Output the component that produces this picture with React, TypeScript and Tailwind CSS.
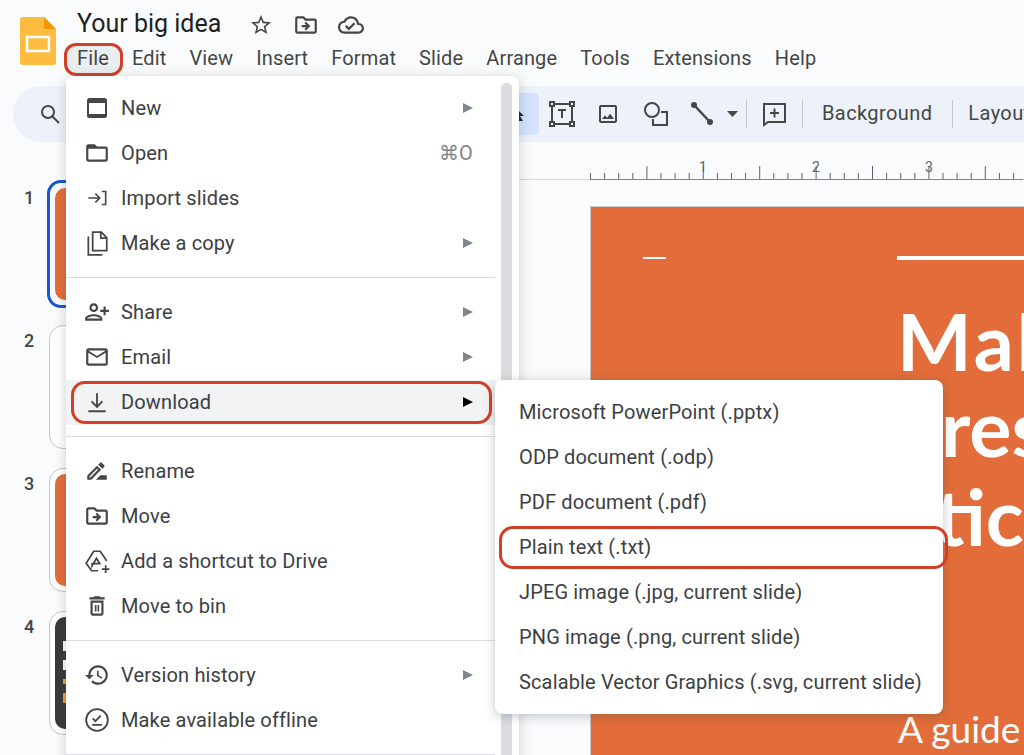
import React from 'react';

const paths = {
  folder: 'M20 6h-8l-2-2H4c-1.1 0-1.99.9-1.99 2L2 18c0 1.1.9 2 2 2h16c1.1 0 2-.9 2-2V8c0-1.1-.9-2-2-2zm0 12H4V8h16v10z',
  person: 'M15 12c2.21 0 4-1.79 4-4s-1.79-4-4-4-4 1.79-4 4 1.79 4 4 4zm0-6c1.1 0 2 .9 2 2s-.9 2-2 2-2-.9-2-2 .9-2 2-2zm0 8c-2.67 0-8 1.34-8 4v2h16v-2c0-2.66-5.33-4-8-4zm-6 4c.22-.72 3.31-2 6-2 2.7 0 5.8 1.29 6 2H9zm-3-3v-3h3v-2H6V7H4v3H1v2h3v3h2z',
  mail: 'M20 4H4c-1.1 0-1.99.9-1.99 2L2 18c0 1.1.9 2 2 2h16c1.1 0 2-.9 2-2V6c0-1.1-.9-2-2-2zm0 14H4V8l8 5 8-5v10zm-8-7L4 6h16l-8 5z',
  rename: 'M15 16l-4 4h10v-4zM12.06 7.19L3 16.25V20h3.75l9.06-9.06-3.75-3.75zM5.92 18H5v-.92l7.06-7.06.92.92L5.92 18zM18.71 8.04c.39-.39.39-1.02 0-1.41l-2.34-2.34c-.2-.2-.45-.29-.71-.29s-.51.1-.7.29l-1.83 1.83 3.75 3.75 1.83-1.83z',
  move: 'M20 6h-8l-2-2H4c-1.1 0-1.99.9-1.99 2L2 18c0 1.1.9 2 2 2h16c1.1 0 2-.9 2-2V8c0-1.1-.9-2-2-2zm0 12H4V6h5.17l2 2H20v10zm-8.01-9l-1.41 1.41L12.16 12H8v2h4.16l-1.59 1.59L11.99 17 16 13.01 11.99 9z',
  bin: 'M6 19c0 1.1.9 2 2 2h8c1.1 0 2-.9 2-2V7H6v12zM8 9h8v10H8V9zm7.5-5l-1-1h-5l-1 1H5v2h14V4zM10 11h1.5v6H10zM12.5 11H14v6h-1.5z',
  history: 'M13 3c-4.97 0-9 4.03-9 9H1l3.89 3.89.07.14L9 12H6c0-3.87 3.13-7 7-7s7 3.13 7 7-3.13 7-7 7c-1.93 0-3.68-.79-4.94-2.06l-1.42 1.42C8.27 19.99 10.51 21 13 21c4.97 0 9-4.03 9-9s-4.03-9-9-9zm-1 5v5l4.28 2.54.72-1.21-3.5-2.08V8H12z',
  star: 'M22 9.24l-7.19-.62L12 2 9.19 8.63 2 9.24l5.46 4.73L5.82 21 12 17.27 18.18 21l-1.63-7.03L22 9.24zM12 15.4l-3.76 2.27 1-4.28-3.32-2.88 4.38-.38L12 6.1l1.71 4.04 4.38.38-3.32 2.88 1 4.28L12 15.4z',
  cloud: 'M19.35 10.04C18.67 6.59 15.64 4 12 4 9.11 4 6.6 5.64 5.35 8.04 2.34 8.36 0 10.91 0 14c0 3.31 2.69 6 6 6h13c2.76 0 5-2.24 5-5 0-2.64-2.05-4.78-4.65-4.96zM19 18H6c-2.21 0-4-1.79-4-4 0-2.05 1.53-3.76 3.56-3.97l1.07-.11.5-.95C8.08 7.14 9.94 6 12 6c2.62 0 4.88 1.86 5.39 4.43l.3 1.5 1.53.11c1.56.1 2.78 1.41 2.78 2.96 0 1.65-1.35 3-3 3zm-9-3.82l-2.09-2.09L6.5 13.5 10 17l6.01-6.01-1.41-1.41z',
  image: 'M19 5v14H5V5h14m0-2H5c-1.1 0-2 .9-2 2v14c0 1.1.9 2 2 2h14c1.1 0 2-.9 2-2V5c0-1.1-.9-2-2-2zm-4.86 8.86l-3 3.87L9 13.14 6 17h12l-3.86-5.14z',
};

const Fill = ({ d, size = 26, flip = false }: { d: string; size?: number; flip?: boolean }) => (
  <svg width={size} height={size} viewBox="0 0 24 24" fill="#444746">
    <path d={d} transform={flip ? 'matrix(-1 0 0 1 24 0)' : undefined} />
  </svg>
);

const Stroke = ({ children, size = 26 }: { children: React.ReactNode; size?: number }) => (
  <svg width={size} height={size} viewBox="0 0 24 24" fill="none" stroke="#444746" strokeWidth="2">
    {children}
  </svg>
);

const NewIcon = () => (
  <svg width="26" height="26" viewBox="0 0 26 26">
    <rect x="3" y="3" width="20" height="20" rx="2.5" fill="#444746" />
    <rect x="5" y="8" width="16" height="11" fill="#fff" />
  </svg>
);
const ImportIcon = () => (
  <Stroke>
    <path d="M4 12h10M10.500 8l4 4-4 4M16.500 6H20v12h-3.500" strokeWidth="1.5" />
  </Stroke>
);
const CopyIcon = () => (
  <Stroke>
    <path d="M8 2h8l5 5v12H8zM15.500 2v5.500H21M4 6v17h13" strokeWidth="1.6" />
  </Stroke>
);
const DownloadIcon = () => (
  <Stroke>
    <path d="M12 4v12M7 11.500l5 5 5-5M4 20.500h16" strokeWidth="1.7" />
  </Stroke>
);
const DriveIcon = () => (
  <Stroke>
    <path d="M13 21H7L2 14 9 3h6l6 9M9 3l-2 3M7.500 16.500L11.500 9.500l3 5H7.500z" strokeWidth="1.6" />
    <path d="M20 16v7M16.500 19.500h7" strokeWidth="1.6" />
  </Stroke>
);
const OfflineIcon = () => (
  <Stroke>
    <circle cx="12" cy="12" r="10" strokeWidth="1.7" />
    <path d="M8 10.500l2.500 2.500 5-5M7.500 16.500h9" strokeWidth="1.7" />
  </Stroke>
);

const Arrow = ({ dark = false }: { dark?: boolean }) => (
  <svg width="10" height="10" viewBox="0 0 10 10">
    <path d="M0 0l10 5-10 5z" fill={dark ? '#000000' : '#80868b'} />
  </svg>
);

const fileGroups: { label: string; icon: React.ReactNode; arrow?: boolean; hint?: string; active?: boolean }[][] = [
  [
    { label: 'New', icon: <NewIcon />, arrow: true },
    { label: 'Open', icon: <Fill d={paths.folder} />, hint: '⌘O' },
    { label: 'Import slides', icon: <ImportIcon /> },
    { label: 'Make a copy', icon: <CopyIcon />, arrow: true },
  ],
  [
    { label: 'Share', icon: <Fill d={paths.person} flip />, arrow: true },
    { label: 'Email', icon: <Fill d={paths.mail} />, arrow: true },
    { label: 'Download', icon: <DownloadIcon />, arrow: true, active: true },
  ],
  [
    { label: 'Rename', icon: <Fill d={paths.rename} /> },
    { label: 'Move', icon: <Fill d={paths.move} /> },
    { label: 'Add a shortcut to Drive', icon: <DriveIcon /> },
    { label: 'Move to bin', icon: <Fill d={paths.bin} /> },
  ],
  [
    { label: 'Version history', icon: <Fill d={paths.history} />, arrow: true },
    { label: 'Make available offline', icon: <OfflineIcon /> },
  ],
];

const formats = [
  'Microsoft PowerPoint (.pptx)',
  'ODP document (.odp)',
  'PDF document (.pdf)',
  'Plain text (.txt)',
  'JPEG image (.jpg, current slide)',
  'PNG image (.png, current slide)',
  'Scalable Vector Graphics (.svg, current slide)',
];

const menuBar = ['File', 'Edit', 'View', 'Insert', 'Format', 'Slide', 'Arrange', 'Tools', 'Extensions', 'Help'];

const Ruler = () => {
  const ticks = [];
  for (let i = 0; i < 31; i++) {
    const x = i * 14.1;
    const big = i % 4 === 0 && i > 0;
    ticks.push(<path key={i} d={`M${x + 0.5} ${big ? 0 : 7}V13`} stroke="#5f6368" strokeWidth="1" />);
  }
  return (
    <svg width="433" height="14" viewBox="0 0 433 14">
      {ticks}
      <path d="M0 13.500H433" stroke="#80868b" strokeWidth="1" />
    </svg>
  );
};

const Thumb = ({ n, selected, children, className }: { n: number; selected?: boolean; children?: React.ReactNode; className?: string }) => (
  <div className="flex h-[124px] mb-[19px]">
    <div className="w-[48px] pl-[24px] pt-[6px] text-[18px] leading-[20px] font-medium text-[#444746]">{n}</div>
    <div
      className={
        selected
          ? 'w-[200px] h-[128px] -mt-[2px] rounded-[14px] border-[3px] border-[#1a56cf] p-[5px] -mb-[4px]'
          : 'w-[200px] ml-[2px] rounded-[14px] border border-[#c4c7c5] p-[5px] bg-white'
      }
    >
      <div className={`h-full rounded-[10px] ${className ?? ''}`}>{children}</div>
    </div>
  </div>
);

export default function App() {
  return (
    <div className="relative w-[1024px] h-[755px] overflow-hidden bg-[#f9fbfd] font-['Roboto',sans-serif] text-[#3c4043]">
      {/* Header */}
      <div className="flex h-[86px] pl-[20px] pt-[9px]">
        <svg width="36" height="48" viewBox="0 0 36 48" className="mt-[8px]">
          <path d="M3 0h21l12 12v33a3 3 0 0 1-3 3H3a3 3 0 0 1-3-3V3a3 3 0 0 1 3-3z" fill="#fbbc3f" />
          <path d="M24 0l12 12H24z" fill="#f29900" />
          <rect x="7" y="20" width="22" height="14" fill="none" stroke="#fff" strokeWidth="2.5" />
        </svg>
        <div className="ml-[21px]">
          <div className="flex items-center h-[30px]">
            <span className="text-[25px] leading-[30px] text-[#1f1f1f] w-[172px]">Your big idea</span>
            <span className="mt-[2px] flex"><Fill d={paths.star} size={24} /></span>
            <span className="ml-[20px] mt-[2px] flex"><Fill d={paths.move} size={26} /></span>
            <span className="ml-[19px] mt-[2px] flex"><Fill d={paths.cloud} size={26} /></span>
          </div>
          <div className="relative flex gap-[23px] mt-[6px] text-[20px] tracking-[0.14px] leading-[26px] text-[#444746]">
            {menuBar.map((m) => (
              <span key={m}>{m}</span>
            ))}
            <div className="absolute -left-[13px] -top-[2px] w-[59px] h-[33px] rounded-[12px] border-[3px] border-[#d23f26] bg-[#3c404312]" />
          </div>
        </div>
      </div>

      {/* Toolbar */}
      <div className="flex items-center h-[56px] ml-[13px] rounded-l-[28px] bg-[#edf2fa] text-[#444746] overflow-hidden [&>*]:shrink-0">
        <span className="ml-[25px] flex"><svg width="24" height="24" viewBox="0 0 24 24" fill="none" stroke="#444746" strokeWidth="2"><circle cx="10" cy="10" r="6" /><path d="M14.500 14.500L21 21" /></svg></span>
        <div className="ml-[457px] w-[20px] h-[42px] rounded-r-[5px] bg-[#d3e3fd] flex items-center justify-end pr-[14px]">
          <svg width="10" height="14" viewBox="0 0 10 14" className="shrink-0"><path d="M0 0l9 9H5l3 5H0z" fill="#0b2a54" /></svg>
        </div>
        <svg width="26" height="26" viewBox="0 0 26 26" className="ml-[10px]" fill="none" stroke="#444746" strokeWidth="2">
          <path d="M3 5v16M23 5v16M5 3h16M5 23h16" />
          <rect x="1" y="1" width="4" height="4" />
          <rect x="21" y="1" width="4" height="4" />
          <rect x="1" y="21" width="4" height="4" />
          <rect x="21" y="21" width="4" height="4" />
          <path d="M9 9h8M13 9v8" />
        </svg>
        <span className="ml-[21px] flex"><Fill d={paths.image} size={24} /></span>
        <svg width="26" height="26" viewBox="0 0 26 26" className="ml-[23px]" fill="none" stroke="#444746" strokeWidth="2">
          <circle cx="9" cy="9" r="7" />
          <path d="M18 11h6v13H10v-6" />
        </svg>
        <svg width="24" height="24" viewBox="0 0 24 24" className="ml-[21px]" fill="none" stroke="#444746" strokeWidth="2">
          <path d="M4 3l16 17" strokeWidth="2.500" />
          <circle cx="4" cy="3" r="2" fill="#444746" />
          <circle cx="20" cy="20" r="2" fill="#444746" />
        </svg>
        <svg width="12" height="6" viewBox="0 0 12 6" className="ml-[13px]"><path d="M0 0h11L5.500 6z" fill="#444746" /></svg>
        <div className="ml-[7px] w-[1px] h-[28px] bg-[#c7c7c7]" />
        <svg width="26" height="26" viewBox="0 0 26 26" className="ml-[14px]" fill="none" stroke="#444746" strokeWidth="2">
          <path d="M3 3h21v18H7l-4 3zM13.500 7.500v9M9 12h9" />
        </svg>
        <div className="ml-[15px] w-[1px] h-[28px] bg-[#c7c7c7]" />
        <span className="ml-[19px] -mt-[2px] text-[20px] tracking-[0.4px]">Background</span>
        <div className="ml-[20px] w-[1px] h-[28px] bg-[#c7c7c7]" />
        <span className="ml-[15px] -mt-[2px] text-[20px] tracking-[0.4px] whitespace-nowrap">Layout</span>
      </div>

      {/* Body */}
      <div className="flex">
        <div className="w-[242px] pt-[40px] shrink-0">
          <Thumb n={1} selected className="bg-[#e36d3a]" />
          <Thumb n={2} className="bg-white" />
          <Thumb n={3} className="bg-[#e36d3a]" />
          <Thumb n={4} className="bg-[#3a3a3a]">
            <div className="flex flex-col items-end w-[11px] pt-[24px] gap-[9px]">
              <div className="w-[3px] h-[10px] bg-white" />
              <div className="w-[3px] h-[10px] bg-white" />
              <div className="w-[3px] h-[5px] bg-[#f59a23]" />
              <div className="w-[3px] h-[10px] bg-[#f59a23]" />
            </div>
          </Thumb>
        </div>

        <div className="flex-1 min-w-0 pl-[348px] pt-[24px]">
          <div className="relative h-[15px] border-b border-transparent">
            <div className="absolute -left-[72px] right-0 top-[13px] h-[1px] bg-[#dadce0]" />
            <div className="absolute left-0 top-0"><Ruler /></div>
            <span className="absolute left-[109px] -top-[6px] text-[14px] leading-[14px] text-[#5f6368]">1</span>
            <span className="absolute left-[222px] -top-[6px] text-[14px] leading-[14px] text-[#5f6368]">2</span>
            <span className="absolute left-[335px] -top-[6px] text-[14px] leading-[14px] text-[#5f6368]">3</span>
          </div>
        </div>
      </div>

      {/* Slide canvas */}
      <div className="absolute left-[590px] top-[206px] w-[434px] h-[549px] bg-[#e36d3a] border-l border-t border-[#c9c9c9] text-white overflow-hidden">
        <div className="absolute left-[52px] top-[50px] w-[23px] h-[2px] bg-white" />
        <div className="absolute left-[306px] top-[49px] w-[130px] h-[4px] bg-white" />
        <div className="absolute left-[306px] top-[84px] text-[79px] tracking-[3px] leading-[100px] font-bold font-['Lato',sans-serif] whitespace-nowrap">Mak</div>
        <div className="absolute left-[350px] top-[170px] text-[79px] leading-[100px] font-bold font-['Lato',sans-serif] whitespace-nowrap">res</div>
        <div className="absolute left-[344px] top-[259px] text-[79px] leading-[100px] font-bold font-['Lato',sans-serif] whitespace-nowrap">tic</div>
        <div className="absolute left-[307px] top-[498px] text-[37px] leading-[48px] font-['Lato',sans-serif] whitespace-nowrap">A guide</div>
      </div>

      {/* File menu */}
      <div className="absolute left-[66px] top-[76px] w-[453px] h-[700px] rounded-[8px] bg-white shadow-[0_2px_12px_rgba(60,64,67,0.25)] pt-[9.5px]">
        <div className="absolute left-[435px] top-[7px] w-[11px] h-[700px] rounded-[5px] bg-[#dadce0]" />
        {fileGroups.map((group, gi) => (
          <div key={gi} className="w-[429px]">
            {group.map((item) => (
              <div
                key={item.label}
                className={`relative flex items-center h-[45px] pl-[18px] pr-[22px] text-[20px] tracking-[0.14px] text-[#3c4043] ${item.active ? 'bg-[#f1f3f4]' : ''}`}
              >
                <span className="w-[26px] h-[26px] flex shrink-0">{item.icon}</span>
                <span className="ml-[11px] flex-1">{item.label}</span>
                {item.hint && <span className="text-[#80868b] text-[20px]">{item.hint}</span>}
                {item.arrow && <Arrow dark={item.active} />}
                {item.active && (
                  <div className="absolute left-[5px] right-[3px] top-[1px] bottom-[1px] rounded-[14px] border-[3px] border-[#d23f26]" />
                )}
              </div>
            ))}
            <div className="h-[1px] bg-[#dadce0] mt-[11px] mb-[12px]" />
          </div>
        ))}
      </div>

      {/* Download submenu */}
      <div className="absolute left-[495px] top-[380px] w-[448px] rounded-[8px] bg-white shadow-[0_2px_12px_rgba(60,64,67,0.3)] py-[9.5px]">
        {formats.map((f) => (
          <div key={f} className="relative flex items-center h-[45px] pl-[24px] text-[20px] tracking-[0.14px] text-[#3c4043] whitespace-nowrap">
            {f}
            {f.startsWith('Plain') && (
              <div className="absolute left-[4px] -right-[5px] top-[1px] bottom-[1px] rounded-[14px] border-[3px] border-[#d23f26]" />
            )}
          </div>
        ))}
      </div>
    </div>
  );
}
